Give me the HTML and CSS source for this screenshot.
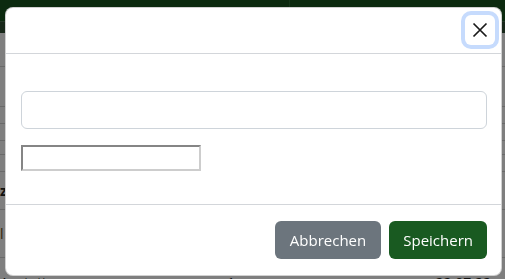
FILE: index.html
```html
<!DOCTYPE html>
<html lang="de">
<head>
<meta charset="utf-8">
<title>Dialog</title>
<link rel="stylesheet" href="styles.css">
</head>
<body>
<div class="page">
  <nav class="navbar"><div class="nav-left"></div><div class="nav-right"></div></nav>
  <div class="subbar"></div>
  <div class="rows">
    <div class="row r34"><span class="cell">&nbsp;</span></div>
    <div class="row r40"><span class="cell">&nbsp;</span></div>
    <div class="row r17"><span class="cell">&nbsp;</span></div>
    <div class="row r17"><span class="cell">&nbsp;</span></div>
    <div class="row r14"><span class="cell">&nbsp;</span></div>
    <div class="row r17"><span class="cell">&nbsp;</span></div>
    <div class="row r38"><span class="cell bold">z</span></div>
    <div class="row r48"><span class="cell brown">l</span></div>
    <div class="row last"><span class="cell">Anstatt</span><span class="cell mid">1</span><span class="cell date">22.07.22</span></div>
  </div>
</div>
<div class="backdrop"></div>
<div class="modal">
  <div class="dialog">
    <div class="modal-header">
      <button class="btn-close" type="button" aria-label="Schließen">
        <svg width="30" height="30" viewBox="0 0 30 30"><path d="M8.5 8.5 L21.5 21.5 M21.5 8.5 L8.5 21.5" stroke="#1a1a1a" stroke-width="1.7" fill="none"/></svg>
      </button>
    </div>
    <div class="modal-body">
      <input class="form-control" type="text">
      <input class="plain-input" type="text">
    </div>
    <div class="modal-footer">
      <button class="btn btn-gray" type="button">Abbrechen</button>
      <button class="btn btn-green" type="button">Speichern</button>
    </div>
  </div>
</div>
</body>
</html>
```
FILE: styles.css
```css
* { box-sizing: border-box; }
html, body { margin: 0; padding: 0; }
body {
  font-family: "Open Sans", "Noto Sans", sans-serif;
  background: #ffffff;
  width: 505px;
  height: 279px;
  overflow: hidden;
}
.page { width: 505px; height: 279px; overflow: hidden; }
.navbar { display: flex; height: 21px; }
.nav-left { width: 290px; background: #18541f; border-right: 1px solid #2d6a33; }
.nav-right { flex: 1; background: #18541f; }
.subbar { height: 12px; background: #2f4f33; border-top: 1px solid #4b6e50; }
.rows { display: flex; flex-direction: column; }
.row {
  border-bottom: 1px solid #d4d4d4;
  display: flex;
  align-items: center;
  font-size: 14px;
  line-height: 14px;
  color: #222;
}
.r14 { height: 14px; }
.r17 { height: 17px; }
.r34 { height: 34px; }
.r38 { height: 38px; }
.r40 { height: 40px; }
.r48 { height: 48px; }
.row.last { height: 40px; align-items: flex-start; padding-top: 18px; border-bottom: 0; }
.cell { white-space: nowrap; }
.cell.bold { font-weight: 700; }
.cell.brown { color: #6b4a10; }
.cell.mid { margin-left: 180px; }
.cell.date { margin-left: auto; margin-right: 14px; }
.backdrop {
  position: fixed; inset: 0;
  background: rgba(0, 0, 0, 0.5);
}
.modal {
  position: fixed; inset: 0;
  padding: 7px 0 0 5px;
}
.dialog {
  width: 497px;
  height: 269px;
  background: #fff;
  border: 1px solid rgba(0, 0, 0, 0.18);
  border-radius: 8px;
  display: flex;
  flex-direction: column;
  overflow: hidden;
}
.modal-header {
  height: 46px;
  border-bottom: 1px solid #d3d6da;
  display: flex;
  justify-content: flex-end;
  align-items: flex-start;
  padding: 7px 6px 0 0;
}
.btn-close {
  width: 30px; height: 30px;
  padding: 0; margin: 0;
  border: 0;
  background: #fff;
  border-radius: 6px;
  box-shadow: 0 0 0 4px #c6dbfd;
  display: block;
}
.btn-close svg { display: block; }
.modal-body {
  height: 151px;
  border-bottom: 1px solid #d3d6da;
  padding: 37px 14px 0 15px;
  display: flex;
  flex-direction: column;
  align-items: flex-start;
  gap: 16px;
}
.form-control {
  width: 100%;
  height: 38px;
  border: 1px solid #ced4da;
  border-radius: 6px;
  background: #fff;
  margin: 0;
  font-size: 16px;
}
.plain-input {
  width: 180px;
  height: 26px;
  margin: 0;
  border: 2px solid;
  border-color: #858585 #cdcdcd #cdcdcd #858585;
  background: #fff;
}
.modal-footer {
  flex: 1;
  display: flex;
  justify-content: flex-end;
  align-items: flex-start;
  gap: 8px;
  padding: 16px 14px 0 0;
}
.btn {
  height: 38px;
  padding: 0 14px;
  border: 0;
  border-radius: 6px;
  color: #fff;
  font-family: "Open Sans", "Noto Sans", sans-serif;
  font-size: 15px;
  line-height: 38px;
  margin: 0;
}
.btn-gray { background: #6c757d; padding: 0 15px; }
.btn-green { background: #195a21; }
```
